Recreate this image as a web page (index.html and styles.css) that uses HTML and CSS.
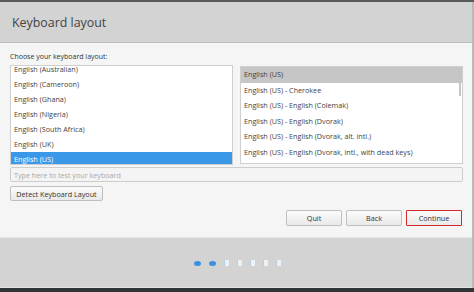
FILE: index.html
```html
<!DOCTYPE html>
<html>
<head>
<meta charset="utf-8">
<link rel="stylesheet" href="styles.css">
</head>
<body>
<div class="screen">
  <div class="topbar"></div>
  <div class="window">
    <div class="header"><h1 class="title">Keyboard layout</h1></div>
    <div class="content">
      <div class="label">Choose your keyboard layout:</div>
      <div class="lists">
        <div class="list list-left">
          <div class="items items-left">
            <div class="item">English (Australian)</div>
            <div class="item">English (Cameroon)</div>
            <div class="item">English (Ghana)</div>
            <div class="item">English (Nigeria)</div>
            <div class="item">English (South Africa)</div>
            <div class="item">English (UK)</div>
            <div class="item item-selected">English (US)</div>
          </div>
        </div>
        <div class="list list-right">
          <div class="items items-right">
            <div class="item ritem item-current">English (US)</div>
            <div class="item ritem">English (US) - Cherokee</div>
            <div class="item ritem">English (US) - English (Colemak)</div>
            <div class="item ritem">English (US) - English (Dvorak)</div>
            <div class="item ritem">English (US) - English (Dvorak, alt. intl.)</div>
            <div class="item ritem">English (US) - English (Dvorak, intl., with dead keys)</div>
            <div class="item ritem">English (US) - English (Dvorak, left-handed)</div>
          </div>
          <div class="scrollthumb"></div>
        </div>
      </div>
      <input class="test-input" type="text" placeholder="Type here to test your keyboard">
      <div class="detect-row"><button class="btn detect">Detect Keyboard Layout</button></div>
      <div class="actions">
        <button class="btn action">Quit</button>
        <button class="btn action">Back</button>
        <button class="btn action primary">Continue</button>
      </div>
    </div>
    <div class="footer">
      <div class="dots">
        <span class="dot dot-on"></span>
        <span class="dot dot-on"></span>
        <span class="dot dot-off"></span>
        <span class="dot dot-off"></span>
        <span class="dot dot-off"></span>
        <span class="dot dot-off"></span>
        <span class="dot dot-off"></span>
      </div>
    </div>
  </div>
  <div class="bottombar"></div>
</div>
</body>
</html>
```
FILE: styles.css
```css
* { box-sizing: border-box; }
html, body { margin: 0; padding: 0; }
body {
  width: 474px;
  height: 292px;
  overflow: hidden;
  background: #2f3437;
  font-family: "Open Sans", "DejaVu Sans", sans-serif;
}
.screen { width: 474px; height: 292px; display: flex; flex-direction: column; }
.topbar { height: 2px; background: #58595b; }
.window {
  flex: none;
  height: 286px;
  display: flex;
  flex-direction: column;
  border-right: 2px solid #b9b9b9;
}
.header {
  height: 41px;
  background: #d3d3d3;
  border-bottom: 1px solid #bcbcbc;
  display: flex;
  align-items: center;
  padding-left: 12px;
  padding-top: 1px;
}
.title {
  margin: 0;
  font-weight: 400;
  font-size: 12.4px;
  color: #444;
}
.content {
  height: 194px;
  background: #f5f5f5;
  padding: 8px 9px 0 10px;
  display: flex;
  flex-direction: column;
}
.label {
  font-size: 7px;
  color: #333;
  height: 14px;
  line-height: 12px;
}
.lists { display: flex; gap: 7px; height: 99px; align-items: flex-start; }
.list {
  position: relative;
  background: #fff;
  border: 1px solid #cfcfcf;
  overflow: hidden;
}
.list-left { width: 223px; height: 100px; }
.list-right { width: 223px; height: 98px; margin-top: 1px; }
.items-left { margin-top: -4px; }
.item {
  height: 15px;
  line-height: 15px;
  font-size: 7.2px;
  color: #3f3f3f;
  padding-left: 3px;
  white-space: nowrap;
}
.ritem { height: 15.5px; line-height: 15.5px; }
.item-selected { background: #3b97e8; color: #fff; }
.item-current { background: #c6c6c6; }
.scrollthumb {
  position: absolute;
  right: 1px;
  top: 1px;
  width: 2px;
  height: 28px;
  background: #c4c4c4;
}
.test-input {
  margin-top: 3px;
  width: 453px;
  height: 15px;
  border: 1px solid #cdcdcd;
  border-radius: 2px;
  background: #f4f4f4;
  font-family: inherit;
  font-size: 7.2px;
  padding: 0 3px;
  outline: none;
}
.test-input::placeholder { color: #a9a9a9; }
.detect-row { margin-top: 4px; display: flex; }
.btn {
  font-family: inherit;
  font-size: 7.2px;
  color: #333;
  background: linear-gradient(#fbfbfb, #e9e9e9);
  border: 1px solid #bfbfbf;
  border-radius: 2px;
  padding: 0;
  margin: 0;
}
.detect { width: 93px; height: 15px; }
.actions {
  margin-top: 9px;
  display: flex;
  justify-content: flex-end;
  gap: 4px;
  padding-right: 1px;
}
.action { width: 56px; height: 16px; }
.primary { border: 1.5px solid #d12a2a; border-radius: 1px; }
.footer {
  flex: 1;
  background: #d3d3d3;
  border-top: 1px solid #e6e6e6;
  border-bottom: 1px solid #dfe3e3;
  display: flex;
  align-items: center;
  justify-content: center;
  padding-left: 2px;
  padding-top: 1px;
}
.dots { display: flex; align-items: center; gap: 8px; }
.dot { display: block; }
.dot-on { width: 7px; height: 5px; border-radius: 50%; background: #3a8fe2; }
.dot-off {
  width: 5px;
  height: 6px;
  background: #eef1f4;
  border-left: 1px solid #b7cde4;
}
.bottombar { flex: 1; background: #2f3437; }
```
